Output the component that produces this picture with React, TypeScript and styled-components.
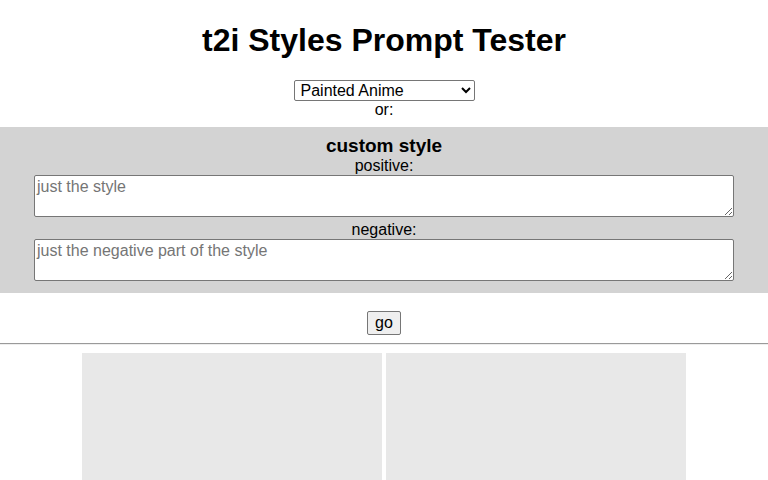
import { createGlobalStyle, styled } from "styled-components";

const GlobalStyle = createGlobalStyle`
  html, body {
    margin: 0;
    padding: 0;
    background: #ffffff;
    font-family: "Liberation Sans", Arial, sans-serif;
    color: #000000;
  }
`;

const Page = styled.div`
  display: flex;
  flex-direction: column;
  align-items: center;
  text-align: center;
`;

const Title = styled.h1`
  font-size: 32px;
  font-weight: 700;
  line-height: 37px;
  margin: 22px 0 21px;
`;

const StyleSelect = styled.select`
  width: 181px;
  height: 21px;
  font-family: "Liberation Sans", Arial, sans-serif;
  font-size: 16px;
  border: 1px solid #767676;
  border-radius: 2px;
  background: #ffffff;
  color: #000000;
  padding: 0 2px;
`;

const Label = styled.div`
  font-size: 16px;
  line-height: 18px;
`;

const CustomSection = styled.section`
  align-self: stretch;
  background: #d3d3d3;
  margin-top: 8px;
  padding: 8px 0 12px;
  display: flex;
  flex-direction: column;
  align-items: center;
`;

const SectionTitle = styled.h3`
  font-size: 19px;
  font-weight: 700;
  line-height: 22px;
  margin: 0;
`;

const Field = styled.textarea<{ $gap?: number }>`
  box-sizing: border-box;
  width: 700px;
  height: 42px;
  margin: 0 0 ${(p) => p.$gap ?? 0}px;
  padding: 2px;
  font-family: "Liberation Sans", Arial, sans-serif;
  font-size: 16px;
  border: 1px solid #767676;
  border-radius: 2px;
  resize: vertical;
  &::placeholder {
    color: #757575;
  }
`;

const GoButton = styled.button`
  margin-top: 18px;
  height: 24px;
  padding: 1px 7px;
  font-family: "Liberation Sans", Arial, sans-serif;
  font-size: 16px;
  background: #efefef;
  border: 1px solid #767676;
  border-radius: 2px;
  color: #000000;
`;

const Divider = styled.hr`
  align-self: stretch;
  margin: 8px 0 8px;
  border: none;
  border-top: 1px solid #9a9a9a;
  border-bottom: 1px solid #eeeeee;
`;

const Gallery = styled.div`
  display: flex;
  gap: 4px;
  justify-content: center;
`;

const ImageSlot = styled.div`
  width: 300px;
  height: 300px;
  background: #e8e8e8;
`;

export default function App() {
  return (
    <>
      <GlobalStyle />
      <Page>
        <Title>t2i Styles Prompt Tester</Title>
        <StyleSelect defaultValue="Painted Anime">
          <option>Painted Anime</option>
          <option>Cinematic</option>
          <option>Photographic</option>
        </StyleSelect>
        <Label>or:</Label>
        <CustomSection>
          <SectionTitle>custom style</SectionTitle>
          <Label>positive:</Label>
          <Field placeholder="just the style" $gap={4} />
          <Label>negative:</Label>
          <Field placeholder="just the negative part of the style" />
        </CustomSection>
        <GoButton>go</GoButton>
        <Divider />
        <Gallery>
          <ImageSlot />
          <ImageSlot />
        </Gallery>
      </Page>
    </>
  );
}
